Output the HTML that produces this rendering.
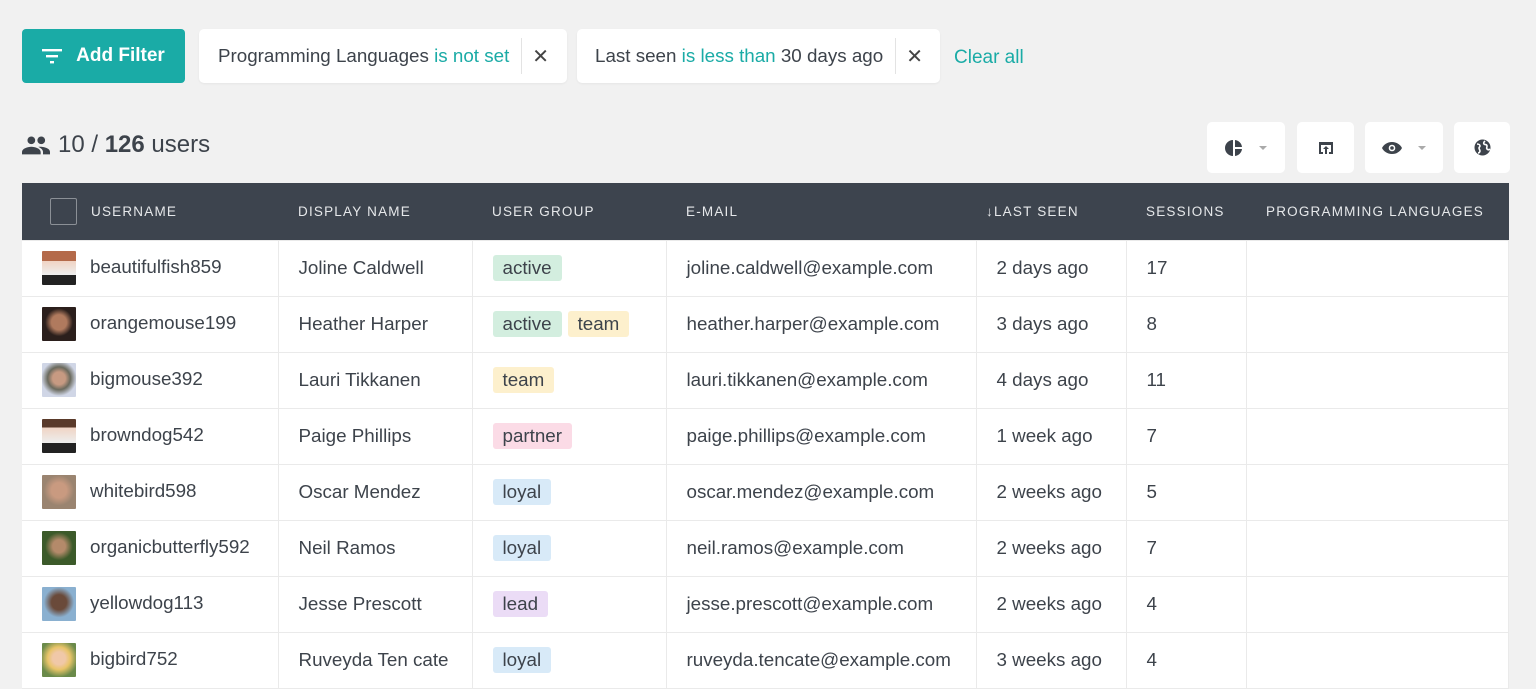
<!DOCTYPE html>
<html><head><style>
*{box-sizing:border-box;margin:0;padding:0}
body{width:1536px;height:687px;overflow:hidden;background:#f1f1f1;font-family:"Liberation Sans",sans-serif;color:#3a4049;position:relative}
.abs{position:absolute}
.btn{left:22px;top:29px;width:163px;height:54px;background:#1aaba6;border-radius:4px;color:#fff;font-weight:bold;font-size:19px;display:flex;align-items:center;justify-content:center;gap:12px}
.chip{top:29px;height:54px;background:#fff;border-radius:5px;display:flex;align-items:center;font-size:18.8px;color:#3d434b;box-shadow:0 1px 2px rgba(0,0,0,.05)}
.chip .t{color:#1aaba6}
.chip .sep{width:1px;height:36px;background:#e3e3e3;margin:0 10px 0 12px}
.chip .x{font-size:20px;color:#444}
.tb{top:122px;height:51px;background:#fff;border-radius:5px;display:flex;align-items:center;justify-content:center;gap:16px}
.caret{width:0;height:0;border-left:4px solid transparent;border-right:4px solid transparent;border-top:4px solid #aaa}
table{position:absolute;left:22px;top:183px;width:1487px;border-collapse:collapse;background:#fff}
th{background:#3d444e;color:#e6e8ea;font-weight:normal;font-size:13.5px;letter-spacing:1.2px;text-align:left;height:57px;padding-left:20px;vertical-align:middle}
td{height:56px;border:1px solid #eaeaea;font-size:18.8px;padding-left:20px;color:#3d434b;white-space:nowrap}
td:first-child{border-left:none}
.av{display:inline-block;width:34px;height:34px;vertical-align:middle;margin-right:14px;border-radius:1px}
.tag{display:inline-block;padding:2px 10px;border-radius:3px;margin-right:6px;line-height:22px}
.a{background:#d3eedf}.tm{background:#fdf0cd}.p{background:#fbdbe6}.l{background:#d8eaf8}.ld{background:#ebdcf6}
</style></head><body>
<div class="abs btn"><svg width="22" height="16" viewBox="0 0 22 16"><rect x="0" y="1" width="20" height="2.4" fill="#fff"/><rect x="4" y="7" width="12" height="2.4" fill="#fff"/><rect x="8" y="13" width="4" height="2.4" fill="#fff"/></svg>Add Filter</div>
<div class="abs chip" style="left:199px;width:368px;padding-left:19px">Programming Languages&nbsp;<span class="t">is not set</span><span class="sep"></span><span class="x">✕</span></div>
<div class="abs chip" style="left:577px;width:363px;padding-left:18px">Last seen&nbsp;<span class="t">is less than</span>&nbsp;30 days ago<span class="sep"></span><span class="x">✕</span></div>
<div class="abs" style="left:954px;top:47px;font-size:19px;color:#1aaba6">Clear all</div>
<div class="abs" style="left:22px;top:131px;font-size:24px;display:flex;align-items:center;gap:8px;color:#3d434b"><svg width="28" height="20" viewBox="0 0 24 16"><circle cx="8" cy="4" r="3.3" fill="#3d434b"/><circle cx="16.5" cy="4" r="3.3" fill="#3d434b"/><path d="M0 16v-2c0-3 5-4.5 8-4.5s8 1.5 8 4.5v2z M14 9.6c3-.3 10 .6 10 4.4v2h-6v-2c0-1.7-1.5-3.3-4-4.4z" fill="#3d434b"/></svg><span>10 / <b>126</b> users</span></div>
<div class="abs tb" style="left:1207px;width:78px"><svg width="18" height="18" viewBox="0 0 18 18"><path d="M8 1A8 8 0 0 0 8 17z M10 1v7h7A8 8 0 0 0 10 1z M10 10v7a8 8 0 0 0 7-7z" fill="#3d434b"/></svg><span class="caret"></span></div>
<div class="abs tb" style="left:1297px;width:57px"><svg width="16" height="16" viewBox="0 0 16 16"><path d="M1 2h14v12h-4v-2h2V5H3v7h2v2H1z M8 6l-3 3h2v5h2V9h2z" fill="#3d434b"/></svg></div>
<div class="abs tb" style="left:1365px;width:78px"><svg width="20" height="14" viewBox="0 0 20 14"><path d="M10 1C5 1 1.5 4 0 7c1.5 3 5 6 10 6s8.5-3 10-6C18.5 4 15 1 10 1z" fill="#3d434b"/><circle cx="10" cy="7" r="3.3" fill="#fff"/><circle cx="10" cy="7" r="1.8" fill="#3d434b"/></svg><span class="caret"></span></div>
<div class="abs tb" style="left:1454px;width:56px"><svg width="17" height="17" viewBox="0 0 17 17"><circle cx="8.5" cy="8.5" r="8" fill="#3d434b"/><path d="M3 5c2 0 3 1 3 2s-1 1-1 2 1 2 1 3-1 2-2 2 M11 2c-1 1-2 2-1 3s3 0 3 2-1 2 0 3 2 1 3 0" stroke="#fff" stroke-width="1.6" fill="none"/></svg></div>
<table>
<tr><th style="width:256px"><div style="display:flex;align-items:center"><span style="display:inline-block;width:27px;height:27px;border:1.5px solid #8b9096;border-radius:2px;margin:0 14px 0 8px"></span>USERNAME</div></th><th style="width:194px">DISPLAY NAME</th><th style="width:194px">USER GROUP</th><th style="width:310px">E-MAIL</th><th style="width:150px;padding-left:10px">↓LAST SEEN</th><th style="width:120px">SESSIONS</th><th>PROGRAMMING LANGUAGES</th></tr>
<tr><td><span class="av" style="background:linear-gradient(#b46a4a 30%,#f0d4c4 30%,#eee 70%,#222 70%)"></span>beautifulfish859</td><td>Joline Caldwell</td><td><span class="tag a">active</span></td><td>joline.caldwell@example.com</td><td>2 days ago</td><td>17</td><td></td></tr>
<tr><td><span class="av" style="background:radial-gradient(circle at 50% 45%,#b07a5e 30%,#2b1f1c 55%)"></span>orangemouse199</td><td>Heather Harper</td><td><span class="tag a">active</span><span class="tag tm">team</span></td><td>heather.harper@example.com</td><td>3 days ago</td><td>8</td><td></td></tr>
<tr><td><span class="av" style="background:radial-gradient(circle at 50% 45%,#c79a82 25%,#6a6a5e 45%,#d0d6e6 70%)"></span>bigmouse392</td><td>Lauri Tikkanen</td><td><span class="tag tm">team</span></td><td>lauri.tikkanen@example.com</td><td>4 days ago</td><td>11</td><td></td></tr>
<tr><td><span class="av" style="background:linear-gradient(#5a3a2a 25%,#f0d4c4 25%,#eee 70%,#222 70%)"></span>browndog542</td><td>Paige Phillips</td><td><span class="tag p">partner</span></td><td>paige.phillips@example.com</td><td>1 week ago</td><td>7</td><td></td></tr>
<tr><td><span class="av" style="background:radial-gradient(circle at 50% 45%,#c99a80 30%,#9a8470 60%)"></span>whitebird598</td><td>Oscar Mendez</td><td><span class="tag l">loyal</span></td><td>oscar.mendez@example.com</td><td>2 weeks ago</td><td>5</td><td></td></tr>
<tr><td><span class="av" style="background:radial-gradient(circle at 50% 45%,#b48a6a 25%,#3c5a2a 55%)"></span>organicbutterfly592</td><td>Neil Ramos</td><td><span class="tag l">loyal</span></td><td>neil.ramos@example.com</td><td>2 weeks ago</td><td>7</td><td></td></tr>
<tr><td><span class="av" style="background:radial-gradient(circle at 50% 45%,#6a4a3a 30%,#8ab0d0 60%)"></span>yellowdog113</td><td>Jesse Prescott</td><td><span class="tag ld">lead</span></td><td>jesse.prescott@example.com</td><td>2 weeks ago</td><td>4</td><td></td></tr>
<tr><td><span class="av" style="background:radial-gradient(circle at 50% 45%,#f0c8a8 25%,#e8c468 45%,#6a8a4a 75%)"></span>bigbird752</td><td>Ruveyda Ten cate</td><td><span class="tag l">loyal</span></td><td>ruveyda.tencate@example.com</td><td>3 weeks ago</td><td>4</td><td></td></tr>
</table>
</body></html>
